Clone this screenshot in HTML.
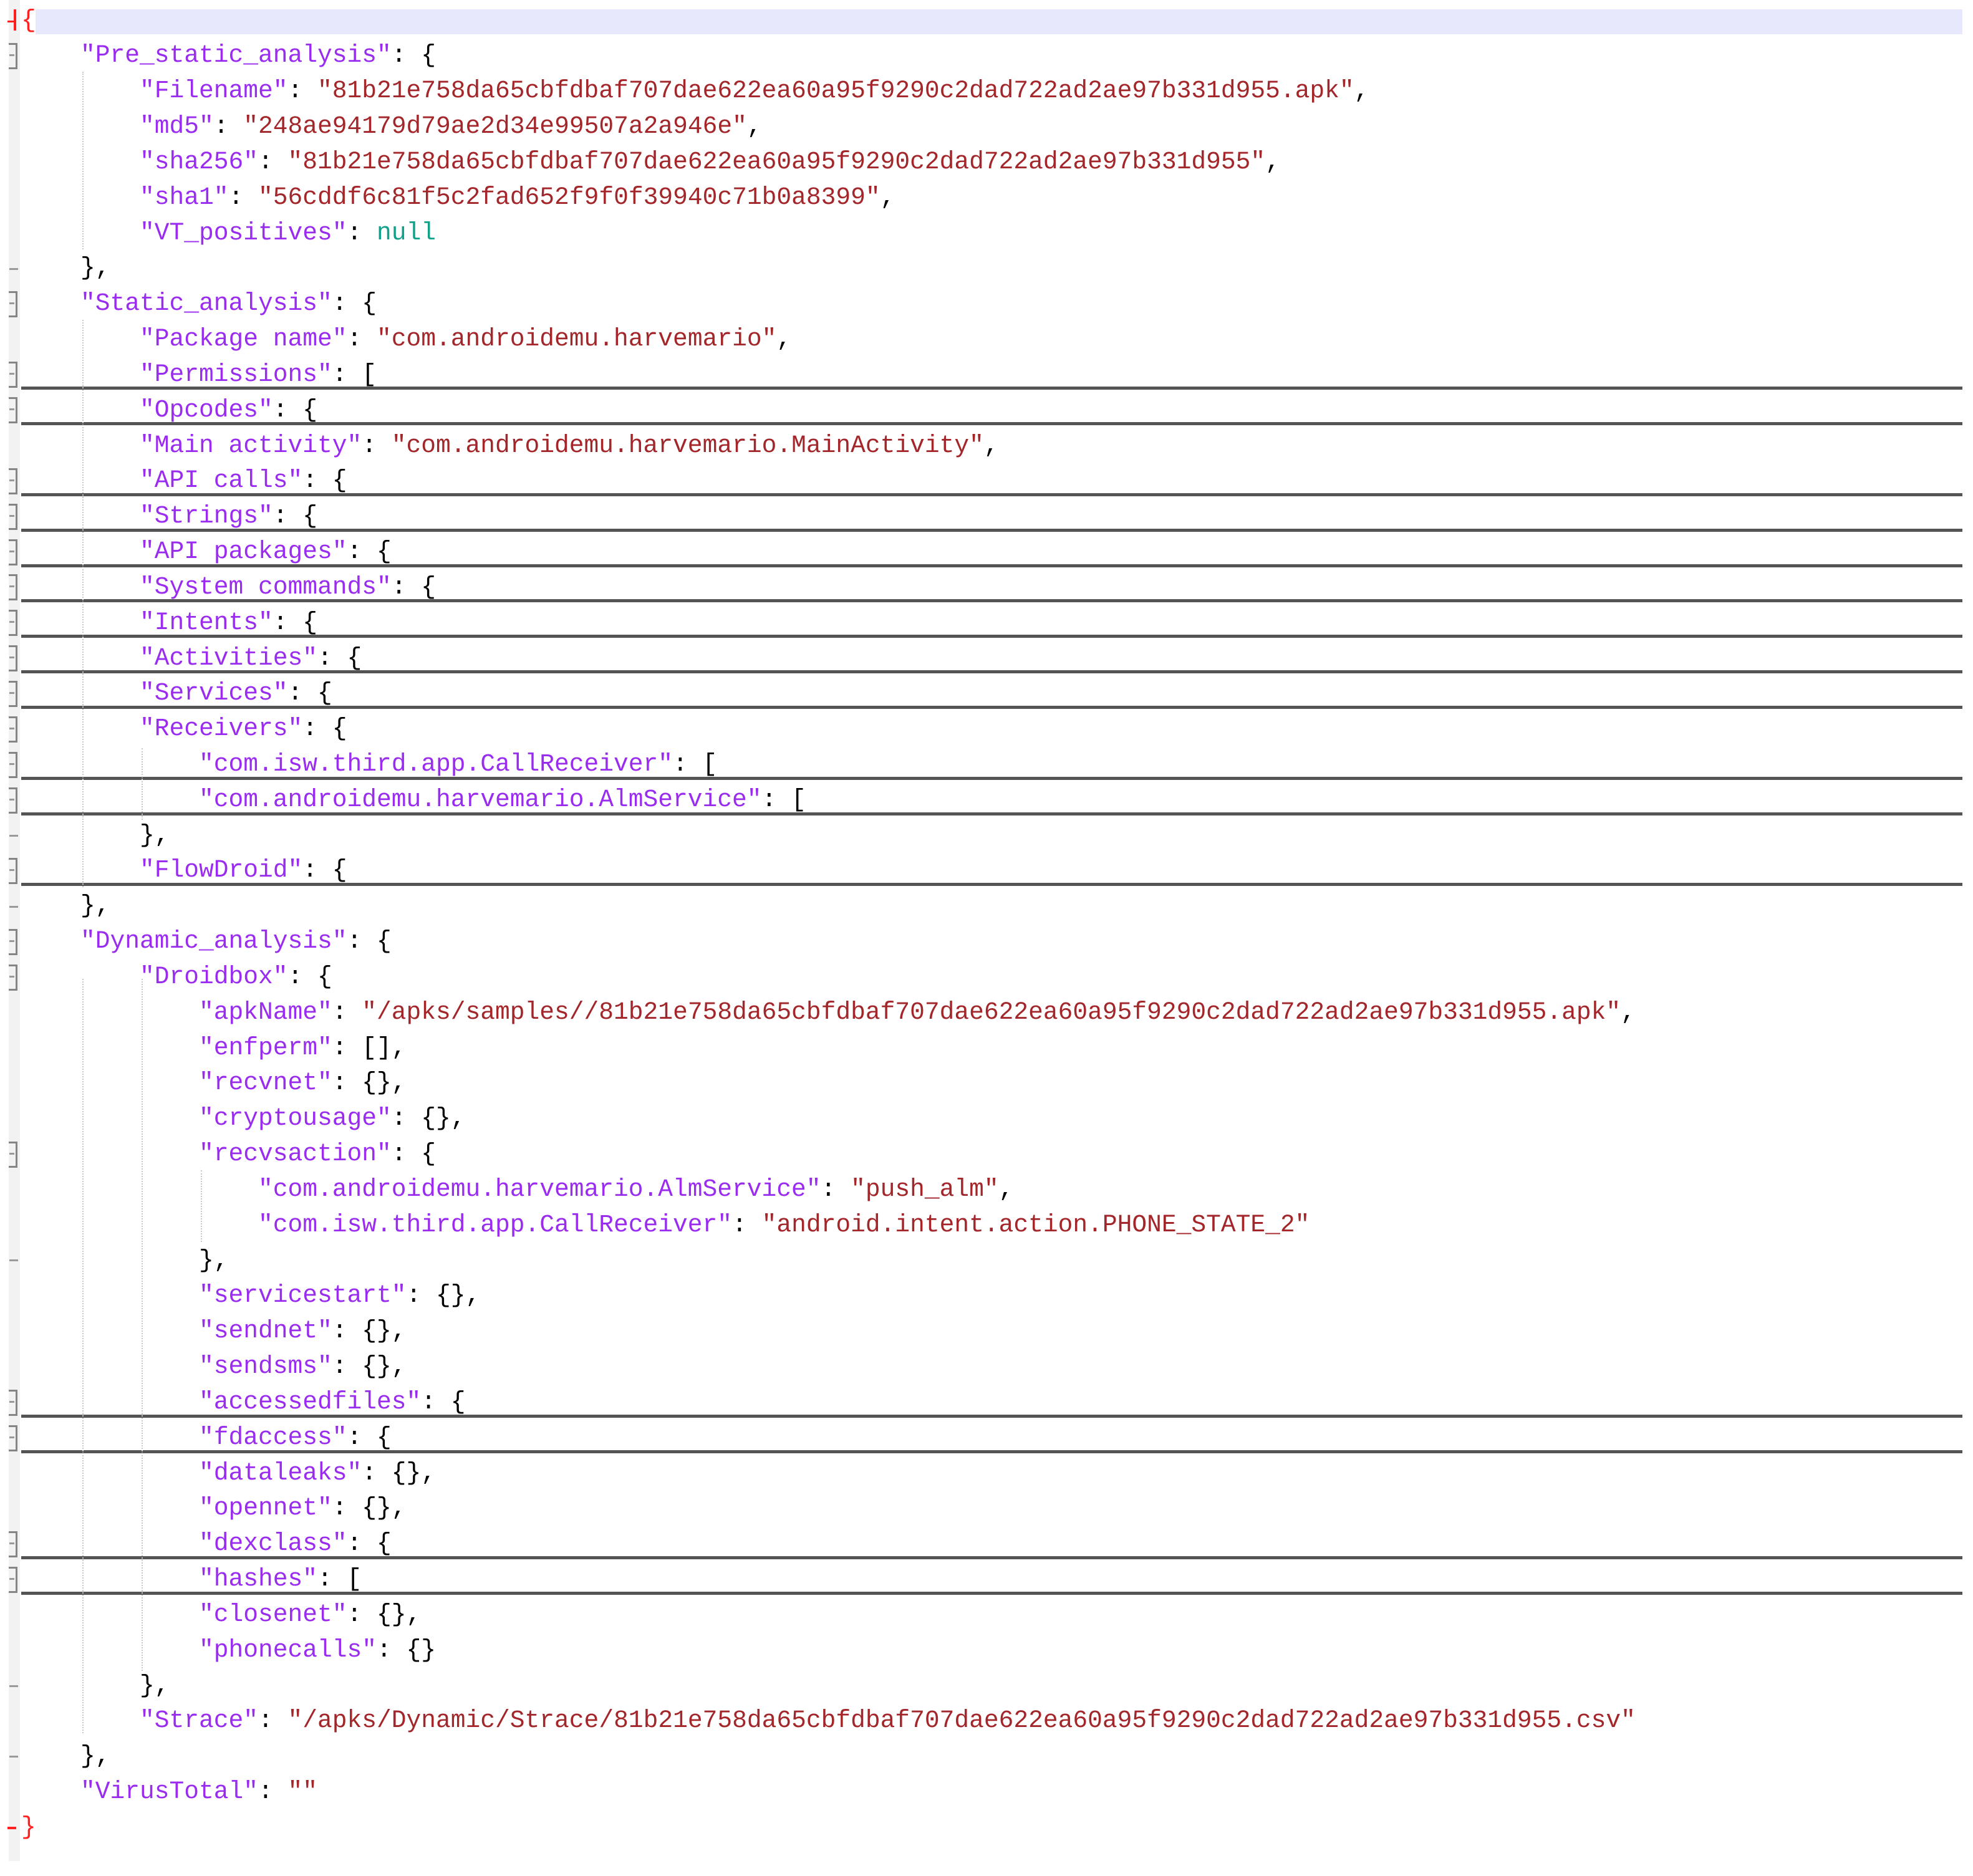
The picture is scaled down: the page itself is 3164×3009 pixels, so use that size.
<!DOCTYPE html>
<html><head><meta charset="utf-8"><style>
html,body{margin:0;padding:0;background:#fff;}
body{width:3164px;height:3009px;position:relative;overflow:hidden;}
#code{position:absolute;left:34px;top:4.6px;font-family:"Liberation Mono","Courier New",monospace;font-size:39.6px;line-height:56.84px;color:#000;z-index:3;}
#code div{height:56.84px;white-space:pre;}
.k{color:#9a2cf0}.s{color:#a2262a}.n{color:#11a08a}.r{color:#ff2020}
.hl{position:absolute;left:57px;top:15px;width:3090px;height:40px;background:#e8e8fc;z-index:1}
.gut{position:absolute;left:14px;top:0;width:18px;height:2985px;background:#f2f2f2;z-index:1}
.sep{position:absolute;left:34px;width:3113px;height:5px;background:#545454;z-index:2}
.g{position:absolute;width:0;border-left:2px dotted #c8c8c8;z-index:2}
.fb{position:absolute;left:14px;width:11px;height:36px;border:3px solid #858585;border-left:none;z-index:2}
.fb:after{content:"";position:absolute;left:1px;top:15px;width:8px;height:3px;background:#999}
.fe{position:absolute;left:15px;width:14px;height:3px;background:#999;z-index:2}
.rd{position:absolute;left:12px;width:14px;height:4px;background:#ff2020;z-index:2}
</style></head><body>
<div class="gut"></div>
<div class="hl"></div>

<div class="rd" style="top:33px;height:3px"></div>
<div class="rd" style="top:2930px"></div>
<div style="position:absolute;left:22px;top:15px;width:4px;height:34px;background:#ff2020;z-index:2"></div>

<div class="fb" style="top:68.8px"></div>
<div class="fb" style="top:466.7px"></div>
<div class="fb" style="top:580.4px"></div>
<div class="fb" style="top:637.2px"></div>
<div class="fb" style="top:750.9px"></div>
<div class="fb" style="top:807.8px"></div>
<div class="fb" style="top:864.6px"></div>
<div class="fb" style="top:921.4px"></div>
<div class="fb" style="top:978.3px"></div>
<div class="fb" style="top:1035.1px"></div>
<div class="fb" style="top:1092px"></div>
<div class="fb" style="top:1148.8px"></div>
<div class="fb" style="top:1205.6px"></div>
<div class="fb" style="top:1262.5px"></div>
<div class="fb" style="top:1376.2px"></div>
<div class="fb" style="top:1489.8px"></div>
<div class="fb" style="top:1546.7px"></div>
<div class="fb" style="top:1830.9px"></div>
<div class="fb" style="top:2228.8px"></div>
<div class="fb" style="top:2285.6px"></div>
<div class="fb" style="top:2456.1px"></div>
<div class="fb" style="top:2513px"></div>

<div class="fe" style="top:429.9px"></div>
<div class="fe" style="top:1339.3px"></div>
<div class="fe" style="top:1453px"></div>
<div class="fe" style="top:2020.4px"></div>
<div class="fe" style="top:2702.5px"></div>
<div class="fe" style="top:2816.2px"></div>

<div class="sep" style="top:620.4px"></div>
<div class="sep" style="top:677.2px"></div>
<div class="sep" style="top:790.9px"></div>
<div class="sep" style="top:847.8px"></div>
<div class="sep" style="top:904.6px"></div>
<div class="sep" style="top:961.4px"></div>
<div class="sep" style="top:1018.3px"></div>
<div class="sep" style="top:1075.1px"></div>
<div class="sep" style="top:1132px"></div>
<div class="sep" style="top:1245.6px"></div>
<div class="sep" style="top:1302.5px"></div>
<div class="sep" style="top:1416.2px"></div>
<div class="sep" style="top:2268.8px"></div>
<div class="sep" style="top:2325.6px"></div>
<div class="sep" style="top:2496.1px"></div>
<div class="sep" style="top:2553px"></div>

<div class="g" style="left:132px;top:115px;height:285px"></div>
<div class="g" style="left:132px;top:513px;height:910px"></div>
<div class="g" style="left:132px;top:1570px;height:1210px"></div>
<div class="g" style="left:227px;top:1200px;height:115px"></div>
<div class="g" style="left:227px;top:1570px;height:1110px"></div>
<div class="g" style="left:322px;top:1877px;height:115px"></div>

<div id="code"><div><span class="r">{</span></div><div>    <span class="k">"Pre_static_analysis"</span>: {</div><div>        <span class="k">"Filename"</span>: <span class="s">"81b21e758da65cbfdbaf707dae622ea60a95f9290c2dad722ad2ae97b331d955.apk"</span>,</div><div>        <span class="k">"md5"</span>: <span class="s">"248ae94179d79ae2d34e99507a2a946e"</span>,</div><div>        <span class="k">"sha256"</span>: <span class="s">"81b21e758da65cbfdbaf707dae622ea60a95f9290c2dad722ad2ae97b331d955"</span>,</div><div>        <span class="k">"sha1"</span>: <span class="s">"56cddf6c81f5c2fad652f9f0f39940c71b0a8399"</span>,</div><div>        <span class="k">"VT_positives"</span>: <span class="n">null</span></div><div>    },</div><div>    <span class="k">"Static_analysis"</span>: {</div><div>        <span class="k">"Package name"</span>: <span class="s">"com.androidemu.harvemario"</span>,</div><div>        <span class="k">"Permissions"</span>: [</div><div>        <span class="k">"Opcodes"</span>: {</div><div>        <span class="k">"Main activity"</span>: <span class="s">"com.androidemu.harvemario.MainActivity"</span>,</div><div>        <span class="k">"API calls"</span>: {</div><div>        <span class="k">"Strings"</span>: {</div><div>        <span class="k">"API packages"</span>: {</div><div>        <span class="k">"System commands"</span>: {</div><div>        <span class="k">"Intents"</span>: {</div><div>        <span class="k">"Activities"</span>: {</div><div>        <span class="k">"Services"</span>: {</div><div>        <span class="k">"Receivers"</span>: {</div><div>            <span class="k">"com.isw.third.app.CallReceiver"</span>: [</div><div>            <span class="k">"com.androidemu.harvemario.AlmService"</span>: [</div><div>        },</div><div>        <span class="k">"FlowDroid"</span>: {</div><div>    },</div><div>    <span class="k">"Dynamic_analysis"</span>: {</div><div>        <span class="k">"Droidbox"</span>: {</div><div>            <span class="k">"apkName"</span>: <span class="s">"/apks/samples//81b21e758da65cbfdbaf707dae622ea60a95f9290c2dad722ad2ae97b331d955.apk"</span>,</div><div>            <span class="k">"enfperm"</span>: [],</div><div>            <span class="k">"recvnet"</span>: {},</div><div>            <span class="k">"cryptousage"</span>: {},</div><div>            <span class="k">"recvsaction"</span>: {</div><div>                <span class="k">"com.androidemu.harvemario.AlmService"</span>: <span class="s">"push_alm"</span>,</div><div>                <span class="k">"com.isw.third.app.CallReceiver"</span>: <span class="s">"android.intent.action.PHONE_STATE_2"</span></div><div>            },</div><div>            <span class="k">"servicestart"</span>: {},</div><div>            <span class="k">"sendnet"</span>: {},</div><div>            <span class="k">"sendsms"</span>: {},</div><div>            <span class="k">"accessedfiles"</span>: {</div><div>            <span class="k">"fdaccess"</span>: {</div><div>            <span class="k">"dataleaks"</span>: {},</div><div>            <span class="k">"opennet"</span>: {},</div><div>            <span class="k">"dexclass"</span>: {</div><div>            <span class="k">"hashes"</span>: [</div><div>            <span class="k">"closenet"</span>: {},</div><div>            <span class="k">"phonecalls"</span>: {}</div><div>        },</div><div>        <span class="k">"Strace"</span>: <span class="s">"/apks/Dynamic/Strace/81b21e758da65cbfdbaf707dae622ea60a95f9290c2dad722ad2ae97b331d955.csv"</span></div><div>    },</div><div>    <span class="k">"VirusTotal"</span>: <span class="s">""</span></div><div><span class="r">}</span></div></div>
</body></html>
